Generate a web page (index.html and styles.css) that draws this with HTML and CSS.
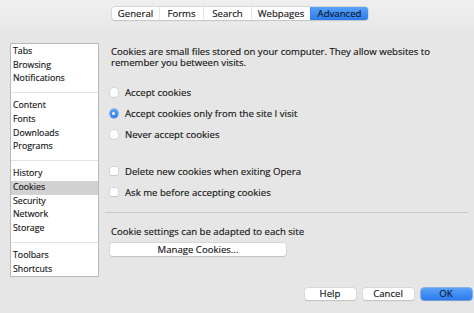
FILE: index.html
```html
<!DOCTYPE html>
<html>
<head>
<meta charset="utf-8">
<link rel="stylesheet" href="styles.css">
</head>
<body>
<div class="window">
  <header class="toolbar">
    <nav class="tabs">
      <span class="tab t-general">General</span>
      <span class="tab t-forms">Forms</span>
      <span class="tab t-search">Search</span>
      <span class="tab t-web">Webpages</span>
      <span class="tab t-adv active">Advanced</span>
    </nav>
  </header>
  <main class="main">
    <ul class="sidebar">
      <li class="item">Tabs</li>
      <li class="item">Browsing</li>
      <li class="item">Notifications</li>
      <li class="sep"></li>
      <li class="item">Content</li>
      <li class="item">Fonts</li>
      <li class="item">Downloads</li>
      <li class="item">Programs</li>
      <li class="sep"></li>
      <li class="item">History</li>
      <li class="item selected">Cookies</li>
      <li class="item">Security</li>
      <li class="item">Network</li>
      <li class="item">Storage</li>
      <li class="sep"></li>
      <li class="item">Toolbars</li>
      <li class="item">Shortcuts</li>
    </ul>
    <section class="content">
      <p class="intro">Cookies are small files stored on your computer. They allow websites to remember you between visits.</p>
      <div class="radios">
        <label class="row"><span class="radio"></span>Accept cookies</label>
        <label class="row"><span class="radio on"></span>Accept cookies only from the site I visit</label>
        <label class="row"><span class="radio"></span>Never accept cookies</label>
      </div>
      <div class="checks">
        <label class="row"><span class="check"></span>Delete new cookies when exiting Opera</label>
        <label class="row"><span class="check"></span>Ask me before accepting cookies</label>
      </div>
      <hr class="rule">
      <p class="note">Cookie settings can be adapted to each site</p>
      <button class="btn manage">Manage Cookies...</button>
    </section>
  </main>
  <footer class="footer">
    <button class="btn fbtn">Help</button>
    <button class="btn fbtn">Cancel</button>
    <button class="btn fbtn primary">OK</button>
  </footer>
</div>
</body>
</html>
```

FILE: styles.css
```css
* { box-sizing: border-box; }
html, body {
  margin: 0;
  padding: 0;
}
body {
  width: 474px;
  height: 313px;
  overflow: hidden;
  background: #e6e6e6;
  font-family: "Open Sans", "DejaVu Sans", sans-serif;
  font-size: 9.6px;
  color: #141414;
  -webkit-text-stroke: 0.15px #141414;
}
.window {
  width: 474px;
  height: 313px;
  display: flex;
  flex-direction: column;
}
.toolbar {
  height: 27px;
  background: linear-gradient(#efefef, #e9e9e9);
  padding-top: 7px;
  padding-left: 112px;
}
.tabs {
  display: flex;
  height: 13px;
  width: max-content;
  border-radius: 3px;
  box-shadow: 0 0 0 0.5px #c4c4c4, 0 0.5px 1px rgba(0,0,0,0.15);
  overflow: hidden;
}
.tab {
  display: flex;
  align-items: center;
  justify-content: center;
  height: 13px;
  background: #ffffff;
  border-left: 1px solid #e6e6e6;
  color: #161616;
}
.tab:first-child { border-left: none; }
.t-general { width: 47px; }
.t-forms { width: 44px; }
.t-search { width: 48px; }
.t-web { width: 59px; }
.t-adv { width: 58px; }
.tab.active {
  background: linear-gradient(#5aa2f7, #2a7bf0);
  border-left-color: #3a86f2;
  color: #0a1730;
}
.main {
  display: flex;
  padding-top: 16px;
  padding-left: 10px;
}
.sidebar {
  list-style: none;
  margin: 0;
  padding: 1px 0 0 0;
  width: 89px;
  height: 234px;
  background: #ffffff;
  border: 1px solid #b9b9b9;
  display: flex;
  flex-direction: column;
  font-size: 8.8px;
  overflow: hidden;
}
.item {
  flex: none;
  height: 13.6px;
  line-height: 13.6px;
  padding-left: 2px;
  white-space: nowrap;
  overflow: hidden;
}
.item.selected {
  background: #d2d2d2;
}
.sep {
  flex: none;
  height: 13.6px;
  display: flex;
  align-items: center;
}
.sep::after {
  content: "";
  display: block;
  width: 100%;
  height: 1px;
  background: #e2e2e2;
}
.content {
  margin-left: 12px;
  width: 357px;
  display: flex;
  flex-direction: column;
  padding-top: 2.5px;
}
.intro {
  margin: 0;
  line-height: 11px;
  width: 340px;
}
.radios {
  margin-top: 14.3px;
  display: flex;
  flex-direction: column;
}
.checks {
  margin-top: 16px;
  display: flex;
  flex-direction: column;
}
.row {
  height: 21px;
  display: flex;
  align-items: center;
  gap: 6px;
  margin-left: -2px;
}
.radio {
  width: 8.5px;
  height: 8.5px;
  border-radius: 50%;
  background: #ffffff;
  box-shadow: 0 0 0 0.5px #c6c6c6, 0 0.5px 1px rgba(0,0,0,0.12);
  display: flex;
  align-items: center;
  justify-content: center;
  flex: none;
  margin-left: 0.5px;
  margin-right: 1px;
}
.radio.on {
  background: linear-gradient(#5da4f8, #2c7cf0);
  box-shadow: 0 0 0 0.5px #3c84e8;
}
.radio.on::after {
  content: "";
  width: 3px;
  height: 3px;
  border-radius: 50%;
  background: #ffffff;
}
.check {
  width: 8px;
  height: 8px;
  border-radius: 1.5px;
  background: #ffffff;
  box-shadow: 0 0 0 0.5px #c6c6c6, 0 0.5px 1px rgba(0,0,0,0.12);
  flex: none;
  margin-left: 0.5px;
  margin-right: 1.5px;
}
.rule {
  margin: 9.5px 0 0 -6px;
  width: 363px;
  border: none;
  height: 1px;
  background: #c9c9c9;
}
.note {
  margin: 11.3px 0 0 0;
  line-height: 13px;
}
.btn {
  font-family: inherit;
  font-size: 9.6px;
  color: #141414;
  background: #ffffff;
  border: none;
  border-radius: 3px;
  box-shadow: 0 0 0 0.5px #cdcdcd, 0 0.5px 1px rgba(0,0,0,0.2);
  padding: 0;
  line-height: 13px;
}
.manage {
  margin-top: 5.5px;
  margin-left: -1px;
  width: 176px;
  height: 13.4px;
}
.footer {
  display: flex;
  justify-content: flex-end;
  gap: 7px;
  padding-right: 2.5px;
  margin-top: 10.7px;
}
.fbtn {
  width: 51px;
  height: 12.5px;
  line-height: 12.5px;
}
.fbtn.primary {
  background: linear-gradient(#5aa2f7, #2a7bf0);
  box-shadow: 0 0 0 0.5px #3a80e6, 0 0.5px 1px rgba(0,0,0,0.2);
  color: #0a1730;
}
```
